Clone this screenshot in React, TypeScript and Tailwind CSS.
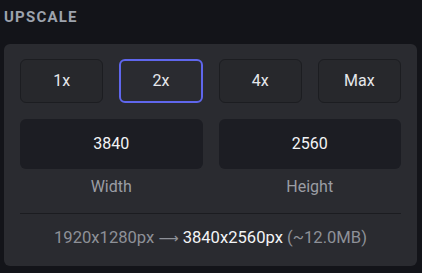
export default function App() {
  const scales = ["1x", "2x", "4x", "Max"];
  const active = "2x";
  return (
    <div className="w-[422px] h-[273px] bg-[#131419] font-['Roboto',sans-serif] overflow-hidden">
      <div className="px-1 pt-[8px]">
        <h2 className="text-[15px] leading-[18px] font-bold tracking-[0.08em] text-[#9da3ad] uppercase">Upscale</h2>
      </div>
      <div className="mt-[18px] ml-1 w-[413px] rounded-[6px] bg-[#2a2b30] px-4 pt-[15px] pb-[16px]">
        <div className="grid grid-cols-4 gap-4">
          {scales.map((s) => (
            <button
              key={s}
              className={
                s === active
                  ? "h-[44px] rounded-[6px] border-2 border-[#5f66ec] bg-[#2a2b30] text-[16px] text-[#e5e7eb]"
                  : "h-[44px] rounded-[6px] border border-[#1c1d21] bg-[#27282c] text-[16px] text-[#e5e7eb]"
              }
            >
              {s}
            </button>
          ))}
        </div>
        <div className="grid grid-cols-2 gap-4 mt-4">
          {[
            ["3840", "Width"],
            ["2560", "Height"],
          ].map(([v, l]) => (
            <div key={l} className="flex flex-col items-center">
              <div className="w-full h-[50px] rounded-[6px] bg-[#1c1d23] flex items-center justify-center text-[16px] text-[#f3f4f6]">
                {v}
              </div>
              <div className="mt-[6px] text-[16px] leading-[24px] text-[#9a9da4]">{l}</div>
            </div>
          ))}
        </div>
        <div className="mt-[14px] border-t border-[#1b1c20] pt-[12px] text-center text-[16.6px] leading-[24px] text-[#8e9198]">
          1920x1280px <span className="font-['DejaVu_Sans',sans-serif] text-[14px]">⟶</span>{" "}
          <span className="text-[#f3f4f6]">3840x2560px</span> (~12.0MB)
        </div>
      </div>
    </div>
  );
}
